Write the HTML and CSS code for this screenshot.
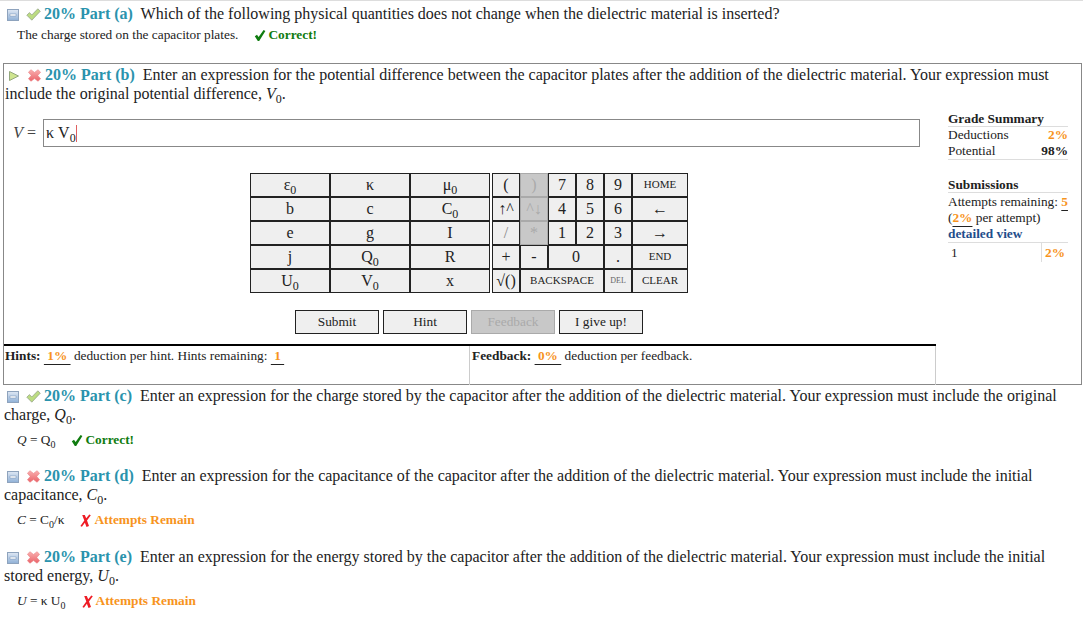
FILE: index.html
```html
<!DOCTYPE html>
<html lang="en">
<head>
<meta charset="utf-8">
<title>Capacitor with dielectric</title>
<link rel="stylesheet" href="styles.css">
</head>
<body>
<svg class="defs" width="0" height="0" aria-hidden="true">
  <defs>
    <linearGradient id="gb" x1="0" y1="0" x2="0" y2="1"><stop offset="0" stop-color="#dfe8f4"/><stop offset="1" stop-color="#8fb0d6"/></linearGradient>
    <linearGradient id="gr" x1="0" y1="0" x2="0" y2="1"><stop offset="0" stop-color="#f9b0b0"/><stop offset="1" stop-color="#ea6268"/></linearGradient>
    <symbol id="minus" viewBox="0 0 12 12"><rect x=".5" y=".5" width="11" height="11" fill="url(#gb)" stroke="#8ea3bd"/><rect x="3" y="5" width="6" height="2" fill="#fff" stroke="#5f7fa6" stroke-width=".4"/></symbol>
    <symbol id="tick" viewBox="0 0 15 13"><path d="M.8 7.200L3.500 4.600 5.800 7l6-6.200 2.500 2.400-8.500 9z" fill="#bcdc82" stroke="#8f9c86" stroke-width=".7"/></symbol>
    <symbol id="cross" viewBox="0 0 13 13"><path d="M3 .7l3.500 2.700L10 .7l2.600 2.500-2.800 3.300 2.800 3.300L10 12.300 6.500 9.600 3 12.300.4 9.800l2.800-3.300L.4 3.200z" fill="url(#gr)" stroke="#e9787c" stroke-width=".5"/></symbol>
    <symbol id="play" viewBox="0 0 12 12"><path d="M1.500 1.500l9 4.500-9 4.500z" fill="#cfe58f" stroke="#93a77d"/></symbol>
    <symbol id="ok" viewBox="0 0 12 12"><path d="M.8 6.800L3 5.200l1.600 2.400L9.600.6l1.800 1L5.200 11.600H3.800z" fill="#107c10"/></symbol>
    <symbol id="no" viewBox="0 0 12 13"><path d="M2.200 1h2.600l1.400 3.300L9.300.5l1.500.7L7 6.500 9 12l-2.500.9-1.600-4.200-3 4-1.500-.6 3.900-5.600z" fill="#ee1c25"/></symbol>
  </defs>
</svg>

<section class="part part-a">
  <h2 class="q"><svg class="ic"><use href="#minus"/></svg><svg class="st"><use href="#tick"/></svg><b class="pt">20% Part (a)</b> <span class="qt">Which of the following physical quantities does not change when the dielectric material is inserted?</span></h2>
  <p class="ans"><span class="val">The charge stored on the capacitor plates.</span><svg class="mk"><use href="#ok"/></svg><b class="good">Correct!</b></p>
</section>

<section class="box">
  <h2 class="q"><svg class="ic"><use href="#play"/></svg><svg class="st"><use href="#cross"/></svg><b class="pt">20% Part (b)</b> <span class="qt">Enter an expression for the potential difference between the capacitor plates after the addition of the dielectric material. Your expression must include the original potential difference, <i>V</i><sub>0</sub>.</span></h2>
  <div class="work">
    <div class="main">
      <div class="entry"><span class="lhs"><i>V</i> =</span><div class="field">κ V<sub>0</sub><span class="caret"></span></div></div>
      <div class="keys">
        <div class="pad sym">
          <button>ε<sub>0</sub></button><button>κ</button><button>μ<sub>0</sub></button>
          <button>b</button><button>c</button><button>C<sub>0</sub></button>
          <button>e</button><button>g</button><button>I</button>
          <button>j</button><button>Q<sub>0</sub></button><button>R</button>
          <button>U<sub>0</sub></button><button>V<sub>0</sub></button><button>x</button>
        </div>
        <div class="pad num">
          <button>(</button><button class="off">)</button><button>7</button><button>8</button><button>9</button><button class="sm">HOME</button>
          <button>↑^</button><button class="off">^↓</button><button>4</button><button>5</button><button>6</button><button>←</button>
          <button class="dim">/</button><button class="off">*</button><button>1</button><button>2</button><button>3</button><button>→</button>
          <button>+</button><button>-</button><button class="w2">0</button><button>.</button><button class="sm">END</button>
          <button class="root">√()</button><button class="w3 sm">BACKSPACE</button><button class="del">DEL</button><button class="sm">CLEAR</button>
        </div>
      </div>
      <div class="acts">
        <button>Submit</button><button>Hint</button><button class="off">Feedback</button><button>I give up!</button>
      </div>
      <div class="info">
        <div class="cell"><b>Hints:</b> <u class="pc">&nbsp;1%&nbsp;</u> deduction per hint. Hints remaining: <u class="pc">&nbsp;1&nbsp;</u></div>
        <div class="cell cell-r"><b>Feedback:</b> <u class="pc">&nbsp;0%&nbsp;</u> deduction per feedback.</div>
      </div>
    </div>
    <aside class="side">
      <h3>Grade Summary</h3>
      <div class="row"><span>Deductions</span><b class="or">2%</b></div>
      <div class="row last"><span>Potential</span><b>98%</b></div>
      <h3 class="sub">Submissions</h3>
      <div class="att">Attempts remaining: <u class="pc">5</u><br>(<u class="pc">2%</u> per attempt)<br><b class="link">detailed view</b></div>
      <div class="hist"><span>1</span><b class="or">2%</b></div>
    </aside>
  </div>
</section>

<section class="part part-c">
  <h2 class="q"><svg class="ic"><use href="#minus"/></svg><svg class="st"><use href="#tick"/></svg><b class="pt">20% Part (c)</b> <span class="qt">Enter an expression for the charge stored by the capacitor after the addition of the dielectric material. Your expression must include the original charge, <i>Q</i><sub>0</sub>.</span></h2>
  <p class="ans"><span class="val"><i>Q</i> = Q<sub>0</sub></span><svg class="mk"><use href="#ok"/></svg><b class="good">Correct!</b></p>
</section>

<section class="part part-d">
  <h2 class="q"><svg class="ic"><use href="#minus"/></svg><svg class="st"><use href="#cross"/></svg><b class="pt">20% Part (d)</b> <span class="qt">Enter an expression for the capacitance of the capacitor after the addition of the dielectric material. Your expression must include the initial capacitance, <i>C</i><sub>0</sub>.</span></h2>
  <p class="ans"><span class="val"><i>C</i> = C<sub>0</sub>/κ</span><svg class="mk"><use href="#no"/></svg><b class="bad">Attempts Remain</b></p>
</section>

<section class="part part-e">
  <h2 class="q"><svg class="ic"><use href="#minus"/></svg><svg class="st"><use href="#cross"/></svg><b class="pt">20% Part (e)</b> <span class="qt">Enter an expression for the energy stored by the capacitor after the addition of the dielectric material. Your expression must include the initial stored energy, <i>U</i><sub>0</sub>.</span></h2>
  <p class="ans"><span class="val"><i>U</i> = κ U<sub>0</sub></span><svg class="mk"><use href="#no"/></svg><b class="bad">Attempts Remain</b></p>
</section>
</body>
</html>
```
FILE: styles.css
```css
* { box-sizing: border-box; }
html, body { margin: 0; padding: 0; }
body {
  width: 1083px; height: 626px; overflow: hidden; background: #fff;
  font-family: "Liberation Serif", "Times New Roman", serif;
  font-size: 16px; line-height: 18px; color: #222;
  border-top: 1px solid #ddd;
}
.defs { position: absolute; }
sub { font-size: 75%; line-height: 0; vertical-align: -4px; }
.q { margin: -1px 0 0; font-size: 16px; font-weight: normal; line-height: 19px; }
.ic { width: 12px; height: 12px; margin-right: 7px; vertical-align: -2px; }
.st { width: 15px; height: 13px; margin-right: 3px; vertical-align: -2px; }
.pt { color: #2a93ad; font-size: 16px; margin-right: 4px; }
.part { padding: 0 3px 0 4px; }
.part .ic { margin-left: 3px; }
.part-a { padding-top: 4px; height: 62px; }
.part-c { padding-top: 2px; height: 82px; }
.part-d { height: 82px; }
.part-e { height: 70px; }
.ans { margin: 7px 0 0 13px; font-size: 13.33px; line-height: 18px; display: flex; align-items: center; }
.part-a .ans { margin-top: 3px; }
.val { margin-right: 16px; }
.mk { width: 12px; height: 13px; margin-right: 2px; }
.good { color: #107c10; }
.bad { color: #f7941d; }
.box { margin-left: 3px; width: 1079px; height: 322px; border: 1px solid #888; padding-top: 2px; }
.box .q { padding-left: 1px; }
.box .ic { margin-left: 3px; }
.work { display: flex; margin-top: 9px; }
.main { width: 932px; padding-top: 7px; }
.entry { display: flex; height: 28px; }
.lhs { width: 39px; text-align: right; padding-right: 7px; line-height: 28px; color: #444; }
.field { width: 877px; height: 28px; border: 1px solid #888; padding-left: 2px; font-size: 16px; line-height: 25px; }
.caret { display: inline-block; width: 1px; height: 17px; background: #e06060; vertical-align: -4px; }
.keys { display: flex; gap: 2px; margin: 26px 0 0 246px; }
.pad { display: grid; }
.pad button, .acts button {
  font: inherit; color: #222; padding: 0; margin: 0; background: #efefef;
  border: 1px solid #222; border-radius: 0; white-space: nowrap;
}
.pad button { height: 24px; font-size: 16px; line-height: 18px; }
.sym { grid-template-columns: repeat(3, 80px); grid-auto-rows: 24px; }
.num { grid-template-columns: repeat(5, 28px) 56px; grid-auto-rows: 24px; }
.pad .off, .acts .off { background: #c8c8c8; color: #aaa; border-color: #aaa; }
.pad .dim { color: #888; }
.pad .sm { font-size: 11px; padding-bottom: 2px; }
.pad .del { font-size: 8px; color: #666; }
.w2 { grid-column: span 2; }
.w3 { grid-column: span 3; }
.acts { display: flex; gap: 4px; margin: 17px 0 0 291px; }
.acts button { width: 84px; height: 24px; font-size: 13.33px; }
.info { display: flex; margin-top: 10px; height: 41px; border-top: 2px solid #000; font-size: 13.33px; line-height: 18px; padding-top: 1px; }
.cell { width: 465px; padding-left: 1px; margin-top: -1px; padding-top: 1px; }
.cell-r { width: 467px; border-left: 1px solid #ccc; border-right: 1px solid #ccc; padding-left: 2px; }
.pc { color: #f7941d; font-weight: bold; text-decoration-color: #222; text-underline-offset: 4px; }
.side { width: 120px; margin-left: 12px; margin-top: -1px; font-size: 13.33px; line-height: 16px; }
.side h3 { margin: 0; font-size: 13.33px; line-height: 15px; border-bottom: 1px solid #ddd; }
.side .sub { margin-top: 17px; }
.row { display: flex; justify-content: space-between; }
.row.last { border-bottom: 1px solid #ddd; }
.att { margin-top: 1px; }
.or { color: #f7941d; }
.link { color: #1f4e8c; }
.hist { display: flex; border-top: 1px solid #ddd; height: 20px; padding-left: 3px; line-height: 20px; }
.hist span { width: 91px; border-right: 1px solid #ddd; }
.hist b { padding-left: 3px; }
```
